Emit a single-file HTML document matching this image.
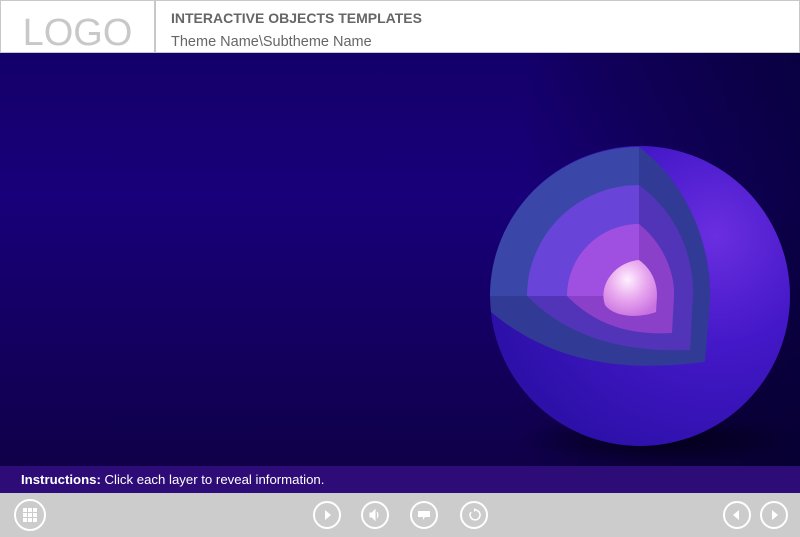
<!DOCTYPE html>
<html><head><meta charset="utf-8"><style>
*{margin:0;padding:0;box-sizing:border-box}
body{width:800px;height:537px;overflow:hidden;font-family:"Liberation Sans",sans-serif;background:#ccc;position:relative}
.hdr{position:absolute;left:0;top:0;width:800px;height:53px;background:#fff;border:1px solid #c8c8c8}
.logo{position:absolute;left:0;top:0;width:155px;height:53px;border-right:2px solid #c8c8c8;color:#c8c8c8;font-size:38px;text-align:center;line-height:64px;letter-spacing:0px}
.t1{position:absolute;left:170px;top:9px;font-size:14px;font-weight:bold;color:#666}
.t2{position:absolute;left:170px;top:33px;font-size:14.5px;color:#666}
.ins{position:absolute;left:0;top:466px;width:800px;height:27px;background:#2e0c78;color:#fff;font-size:13.2px;line-height:27px;padding-left:21px}
.btn{position:absolute;top:501px;width:28px;height:28px;border:2px solid #fff;border-radius:50%}
</style></head><body>
<div class="hdr"><div class="logo">LOGO</div><div class="t1">INTERACTIVE OBJECTS TEMPLATES</div><div class="t2">Theme Name\Subtheme Name</div></div>
<svg style="position:absolute;left:0;top:53px" width="800" height="413" viewBox="0 53 800 413">
<defs>
<linearGradient id="bg" x1="0" y1="0" x2="0" y2="1"><stop offset="0" stop-color="#14006a"/><stop offset=".35" stop-color="#18007a"/><stop offset="1" stop-color="#0f0048"/></linearGradient>
<linearGradient id="bgr" x1="0" y1="0" x2="1" y2="0"><stop offset=".65" stop-color="#000" stop-opacity="0"/><stop offset="1" stop-color="#000020" stop-opacity=".55"/></linearGradient>
<radialGradient id="sp" cx="0.75" cy="0.3" r="0.8"><stop offset="0" stop-color="#6a2ee0"/><stop offset=".45" stop-color="#4418c8"/><stop offset="1" stop-color="#2c10a8"/></radialGradient>
<radialGradient id="ic" cx="0.45" cy="0.35" r="0.7"><stop offset="0" stop-color="#fff0ff"/><stop offset=".5" stop-color="#e8a8ee"/><stop offset="1" stop-color="#c870e0"/></radialGradient>
<radialGradient id="sh" cx="0.5" cy="0.5" r="0.5"><stop offset="0" stop-color="#000010" stop-opacity=".8"/><stop offset="1" stop-color="#000010" stop-opacity="0"/></radialGradient>
</defs>
<rect x="0" y="53" width="800" height="413" fill="url(#bg)"/>
<rect x="0" y="53" width="800" height="413" fill="url(#bgr)"/>
<ellipse cx="660" cy="440" rx="140" ry="25" fill="url(#sh)"/>
<circle cx="640" cy="296" r="150" fill="url(#sp)"/>
<path d="M639,147 C690,185 712,250 710,300 L705,362 C640,370 560,370 491,312 L490,296 L639,296Z" fill="#313a95"/>
<path d="M639,296 L490,296 A149,149 0 0 1 639,147Z" fill="#3a47a8"/>
<path d="M639,185 C680,215 694,260 693,296 L690,350 C640,352 575,345 527,296Z" fill="#5234b8"/>
<path d="M639,296 L527,296 A112,111 0 0 1 639,185Z" fill="#6844d8"/>
<path d="M639,224 C665,245 675,275 674,296 L672,333 C640,335 600,330 567,296Z" fill="#8a40c8"/>
<path d="M639,296 L567,296 A72,72 0 0 1 639,224Z" fill="#a050e0"/>
<path d="M639,260 C650,268 657,280 657,296 L656,312 C640,318 615,318 605,305 C598,285 615,262 639,260Z" fill="url(#ic)"/>
</svg>
<div class="ins"><b>Instructions:</b> Click each layer to reveal information.</div>
<div class="btn" style="left:14px;width:32px;height:32px;top:499px"><svg width="28" height="28" viewBox="0 0 28 28"><g fill="#fff"><rect x="7" y="7" width="4" height="4"/><rect x="12" y="7" width="4" height="4"/><rect x="17" y="7" width="4" height="4"/><rect x="7" y="12" width="4" height="4"/><rect x="12" y="12" width="4" height="4"/><rect x="17" y="12" width="4" height="4"/><rect x="7" y="17" width="4" height="4"/><rect x="12" y="17" width="4" height="4"/><rect x="17" y="17" width="4" height="4"/></g></svg></div>
<div class="btn" style="left:313px"><svg width="24" height="24"><path d="M10 7 L16 12 L10 17Z" fill="#fff"/></svg></div>
<div class="btn" style="left:361px"><svg width="24" height="24"><path d="M7 10 H9 L12 7 V17 L9 14 H7Z M14 9 Q16 12 14 15" fill="#fff" stroke="#fff"/></svg></div>
<div class="btn" style="left:410px"><svg width="24" height="24"><path d="M6 8 H18 V14 H13 L11 17 V14 H6Z" fill="#fff"/></svg></div>
<div class="btn" style="left:460px"><svg width="24" height="24"><path d="M9 9 A5 5 0 1 0 14 7" fill="none" stroke="#fff" stroke-width="1.5"/><path d="M12 5 L15 7 L12 9Z" fill="#fff"/></svg></div>
<div class="btn" style="left:723px"><svg width="24" height="24"><path d="M14 7 L8 12 L14 17Z" fill="#fff"/></svg></div>
<div class="btn" style="left:760px"><svg width="24" height="24"><path d="M10 7 L16 12 L10 17Z" fill="#fff"/></svg></div>
</body></html>
